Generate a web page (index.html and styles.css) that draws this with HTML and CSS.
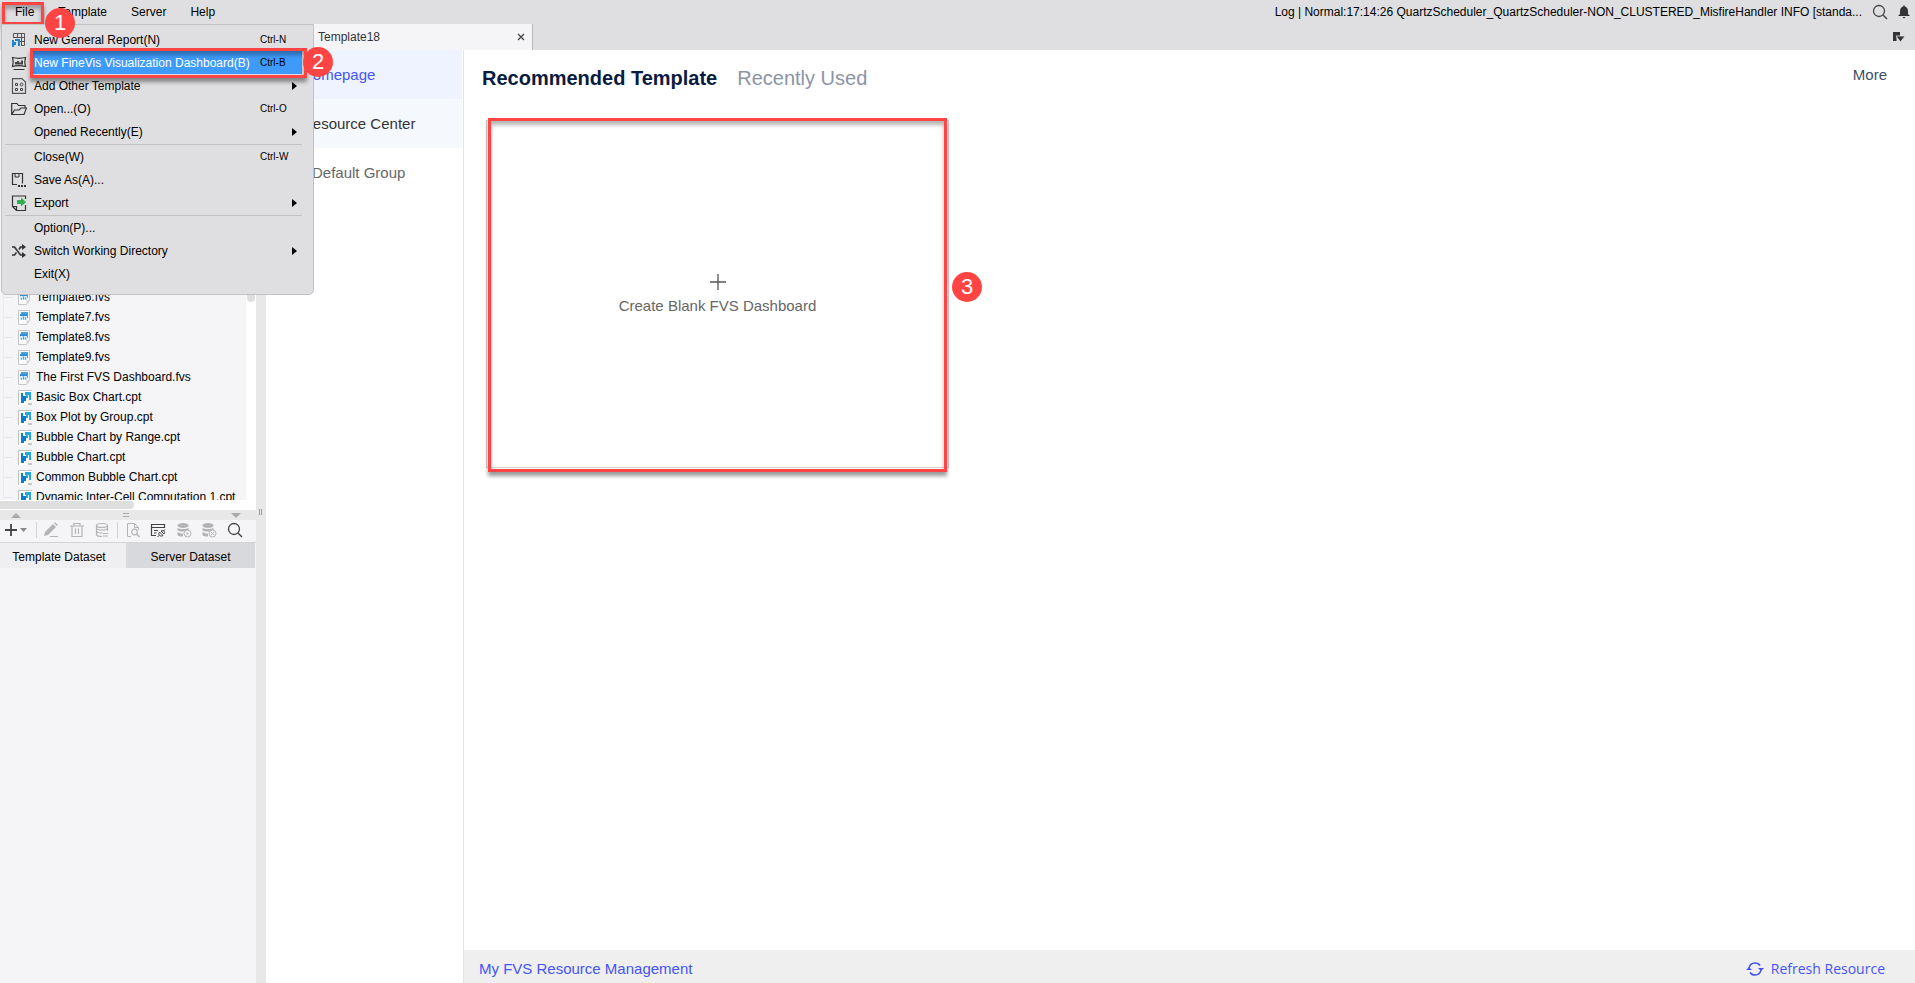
FILE: index.html
```html
<!DOCTYPE html>
<html lang="en">
<head>
    <meta charset="utf-8">
    <title>Designer</title>
    <link rel="stylesheet" href="styles.css">
</head>
<body>

<!-- shared icons -->
<svg class="defs" width="0" height="0">
    <symbol id="fvs" viewBox="0 0 14 15">
        <path d="M.5 .5h11v10l-3 4h-8z" fill="#fafafa" stroke="#c4c6ca"/>
        <path d="M12 10.500H8.500V14z" fill="#d0d2d5"/>
        <path d="M3 2h7v6H9V4H3z" fill="#4aa3e0"/>
        <path d="M2 4h7v2H2z" fill="#2f8fd6"/>
        <path d="M2 6h7v4H2z" fill="#cdeaf8"/>
        <path d="M3.500 9.500V8M5.500 9.500V6.500M7.500 9.500V7.500" stroke="#5aa85a"/>
    </symbol>
    <symbol id="cpt" viewBox="0 0 14 15">
        <path d="M0 0h14v11h-4v4H0z" fill="#fff"/>
        <path d="M.5 15V.5H14" fill="none" stroke="#c4c4c4"/>
        <path d="M10 13h4v2h-4z" fill="#c4c4c4"/>
        <path d="M3 3h2v3h3v5H6v2H3z" fill="#0a7bd0"/>
        <path d="M7 2h6v8h-2V5h-1v3H8V5H7z" fill="#21a9e6"/>
    </symbol>
    <symbol id="search" viewBox="0 0 16 16">
        <circle cx="7" cy="7" r="5.500" fill="none" stroke="currentColor" stroke-width="1.300"/>
        <path d="M11 11l4 4" stroke="currentColor" stroke-width="1.500"/>
    </symbol>
    <symbol id="db" viewBox="0 0 16 16">
        <ellipse cx="7" cy="3.500" rx="5.500" ry="2.500" fill="currentColor"/>
        <path d="M1.500 5.500c1 2 10 2 11 0v2.500c-1 2-10 2-11 0zM1.500 9.500c1 1.500 3 2 5.500 2v3c-3 0-5-.5-5.500-1.500z" fill="currentColor"/>
        <circle cx="11.500" cy="11.500" r="3.500" fill="#f5f5f7" stroke="currentColor"/>
    </symbol>
</svg>

<header class="menuBar">
    <div class="fileItem">
        <button class="menuButton">File</button>
        <span class="mark"></span>
        <span class="badge badgeOne">1</span>
    </div>
    <button class="menuButton">Template</button>
    <button class="menuButton">Server</button>
    <button class="menuButton">Help</button>
    <p class="log">Log | Normal:17:14:26 QuartzScheduler_QuartzScheduler-NON_CLUSTERED_MisfireHandler INFO [standa...</p>
    <button class="iconButton topIcon" aria-label="Search"><svg width="16" height="16"><use href="#search"/></svg></button>
    <button class="iconButton topIcon" aria-label="Notifications">
        <svg width="12" height="14" viewBox="0 0 12 14"><path d="M6 0l1 1.500c2 .5 3 2.500 3 5V9l2 2H0l2-2V6.500c0-2.500 1-4.500 3-5zM4.500 12h3L6 13.500z" fill="#333"/></svg>
    </button>

    <ul class="fileMenu">
        <li><button class="menuRow">
            <svg class="menuIcon" viewBox="0 0 16 16"><path d="M2.500 6V1.500h11v12H10M2 5.500h11.500M6.500 1.500V6M10.500 1.500v12M9 9.500h4.500" fill="none" stroke="#555"/><path d="M1 8h2v2h2v3H3v2H1zM4 7h5v7H7V9H4z" fill="#1787d4"/></svg>
            New General Report(N)<kbd>Ctrl-N</kbd></button></li>
        <li class="selectedItem"><button class="menuRow">
            <svg class="menuIcon" viewBox="0 0 16 16"><path d="M1.500 2.500c4 1 9 1 13 0-1 3-1 6 0 9-4-1-9-1-13 0 1-3 1-6 0-9zM2.500 14.500h11" fill="none" stroke="#333" stroke-width="1.200"/><path d="M4 9.500V7h2V6h2v1.500h2V5.500h2v4z" fill="#444"/></svg>
            <span class="selectedText">New FineVis Visualization Dashboard(B)</span><kbd>Ctrl-B</kbd></button>
            <span class="mark"></span>
            <span class="badge badgeTwo">2</span></li>
        <li><button class="menuRow">
            <svg class="menuIcon" viewBox="0 0 16 16"><path d="M1.500 .6H11l3.500 3.500v11.300h-13z" fill="none" stroke="#555" stroke-width="1.200"/><path d="M4.500 5.500h2v2h-2zM4.500 10.500h2v2h-2zM9.500 10.500h2v2h-2z" fill="none" stroke="#444"/><circle cx="10.500" cy="6.500" r="1.400" fill="none" stroke="#444"/></svg>
            Add Other Template<i class="arrow"></i></button></li>
        <li><button class="menuRow">
            <svg class="menuIcon" viewBox="0 0 16 16"><path d="M.7 13.500V2.500H6l1.500 2H14V7M.7 13.500L3.500 9H8l2-2h5.500L13 13.500z" fill="none" stroke="#333" stroke-width="1.200"/></svg>
            Open...(O)<kbd>Ctrl-O</kbd></button></li>
        <li><button class="menuRow"><i class="menuIcon"></i>Opened Recently(E)<i class="arrow"></i></button></li>
        <li class="separator"></li>
        <li><button class="menuRow"><i class="menuIcon"></i>Close(W)<kbd>Ctrl-W</kbd></button></li>
        <li><button class="menuRow">
            <svg class="menuIcon" viewBox="0 0 16 16"><path d="M6 12.500H1.500v-11h10v10" fill="none" stroke="#333" stroke-width="1.200"/><path d="M4 2v3h4V2" fill="none" stroke="#333"/><path d="M7 13h2v2H7zM10 13h2v2h-2zM13 13h2v2h-2z" fill="#333"/></svg>
            Save As(A)...</button></li>
        <li><button class="menuRow">
            <svg class="menuIcon" viewBox="0 0 16 16"><path d="M14.500 4V1H1.500v10.500l4 4h9V10M1.500 11.500h4v4" fill="none" stroke="#333" stroke-width="1.200"/><path d="M6 5h4V2.500L15 7l-5 4.500V9H6z" fill="#2fae4e"/></svg>
            Export<i class="arrow"></i></button></li>
        <li class="separator"></li>
        <li><button class="menuRow"><i class="menuIcon"></i>Option(P)...</button></li>
        <li><button class="menuRow">
            <svg class="menuIcon" viewBox="0 0 16 16"><path d="M1 4h2.500l6 8H12M1 12h2.500l2-2.500M8 6.500L9.500 4H12" fill="none" stroke="#333" stroke-width="1.600"/><path d="M11 1l4 3-4 3zM11 9l4 3-4 3z" fill="#333"/></svg>
            Switch Working Directory<i class="arrow"></i></button></li>
        <li><button class="menuRow"><i class="menuIcon"></i>Exit(X)</button></li>
    </ul>
</header>

<div class="tabBar">
    <div class="fileTab">
        <span>Template18</span>
        <button class="iconButton" aria-label="Close tab"><svg width="8" height="8" viewBox="0 0 8 8"><path d="M1 1l6 6M7 1L1 7" stroke="#444" stroke-width="1.300"/></svg></button>
    </div>
    <button class="iconButton" aria-label="Tab list">
        <svg width="12" height="12" viewBox="0 0 12 12"><path d="M0 1h7v4H3.500v5H0z" fill="#333"/><path d="M3 5h9l-4.500 6z" fill="#333" stroke="#dfdfe1" stroke-width=".8"/></svg>
    </button>
</div>

<div class="workspace">
    <aside class="leftPanel">
        <div class="treeArea">
            <ul class="tree">
                <li><svg class="fileIcon"><use href="#fvs"/></svg>Template6.fvs</li>
                <li><svg class="fileIcon"><use href="#fvs"/></svg>Template7.fvs</li>
                <li><svg class="fileIcon"><use href="#fvs"/></svg>Template8.fvs</li>
                <li><svg class="fileIcon"><use href="#fvs"/></svg>Template9.fvs</li>
                <li><svg class="fileIcon"><use href="#fvs"/></svg>The First FVS Dashboard.fvs</li>
                <li><svg class="fileIcon"><use href="#cpt"/></svg>Basic Box Chart.cpt</li>
                <li><svg class="fileIcon"><use href="#cpt"/></svg>Box Plot by Group.cpt</li>
                <li><svg class="fileIcon"><use href="#cpt"/></svg>Bubble Chart by Range.cpt</li>
                <li><svg class="fileIcon"><use href="#cpt"/></svg>Bubble Chart.cpt</li>
                <li><svg class="fileIcon"><use href="#cpt"/></svg>Common Bubble Chart.cpt</li>
                <li><svg class="fileIcon"><use href="#cpt"/></svg>Dynamic Inter-Cell Computation 1.cpt</li>
            </ul>
            <div class="scrollY"><div class="thumbY"></div></div>
        </div>
        <div class="scrollX"><div class="thumbX"></div></div>
        <div class="splitter">
            <i class="up"></i><i class="grip"></i><i class="down"></i>
        </div>
        <div class="toolbar">
            <button class="iconButton dark" aria-label="Add dataset"><svg width="24" height="16" viewBox="0 0 24 16"><path d="M0 8h12M6 2v12" stroke="currentColor" stroke-width="1.800"/><path d="M15 6h7l-3.500 4z" fill="#888"/></svg></button>
            <i class="toolLine"></i>
            <button class="iconButton" aria-label="Edit"><svg width="16" height="16" viewBox="0 0 16 16"><path d="M1 14l1-4 8-8 3 3-8 8zM11 1l1-1 3 3-1 1z" fill="currentColor"/><path d="M7 14.500h8" stroke="currentColor"/></svg></button>
            <button class="iconButton" aria-label="Delete"><svg width="16" height="16" viewBox="0 0 16 16"><path d="M1 4h14M5 4V1.500h6V4M3 4v10.500h10V4M6.500 6.500V12M9.500 6.500V12" fill="none" stroke="currentColor" stroke-width="1.200"/></svg></button>
            <button class="iconButton" aria-label="Database"><svg width="16" height="16" viewBox="0 0 16 16"><path d="M2.500 3.500v9c0 1 2 2 5.500 2M13.500 3.500V9M2.500 6.500c1 2 10 2 11 0M2.500 9.500c1 1.500 4 1.500 6 1.500M9 11.500h5M9 14h5" fill="none" stroke="currentColor" stroke-width="1.200"/><ellipse cx="8" cy="3.500" rx="5.500" ry="2" fill="none" stroke="currentColor" stroke-width="1.200"/></svg></button>
            <i class="toolLine"></i>
            <button class="iconButton" aria-label="Preview"><svg width="16" height="16" viewBox="0 0 16 16"><path d="M6 14.500H2.500v-13h7l4 4V8M9.500 1.500v4h4" fill="none" stroke="currentColor"/><circle cx="9.500" cy="10" r="2.800" fill="none" stroke="currentColor" stroke-width="1.200"/><path d="M11.500 12l3 3" stroke="currentColor" stroke-width="1.300"/></svg></button>
            <button class="iconButton dark" aria-label="Dataset settings"><svg width="16" height="16" viewBox="0 0 16 16"><path d="M6 13.500H1.500v-11h13V6M1.500 5.500h13M4 8.500h4M4 11h2.500" fill="none" stroke="currentColor" stroke-width="1.200"/><path d="M7.500 15l2-2M13 9.500l2-2M9.500 10l3.500 3.500c-1.500 1-3 .5-3.500-.3-.8-.7-1-2 0-3.200zM11 9l3 3c1-1 .8-2 .2-2.700C13.500 8.500 12 8 11 9z" fill="none" stroke="currentColor"/></svg></button>
            <button class="iconButton" aria-label="Run dataset"><svg width="16" height="16" viewBox="0 0 16 16"><use href="#db" width="16" height="16"/><path d="M10.500 10v3l2.500-1.500z" fill="currentColor"/></svg></button>
            <button class="iconButton" aria-label="Clear dataset"><svg width="16" height="16" viewBox="0 0 16 16"><use href="#db" width="16" height="16"/><path d="M10 10l3 3M13 10l-3 3" stroke="currentColor"/></svg></button>
            <button class="iconButton dark" aria-label="Find"><svg width="16" height="16"><use href="#search"/></svg></button>
        </div>
        <div class="datasetTabs">
            <button class="datasetTab active">Template Dataset</button>
            <button class="datasetTab">Server Dataset</button>
        </div>
    </aside>
    <div class="divider"><i></i></div>

    <nav class="sideNav">
        <a class="navItem current" href="#">Homepage</a>
        <a class="navItem center" href="#">Resource Center</a>
        <a class="navItem child" href="#">Default Group</a>
    </nav>

    <main class="content">
        <div class="contentTop">
            <h1>Recommended Template</h1>
            <h2>Recently Used</h2>
            <a class="more" href="#">More</a>
        </div>
        <div class="cards">
            <div class="cardWrap">
                <button class="blankCard">
                    <svg width="16" height="16" viewBox="0 0 16 16"><path d="M0 8h16M8 0v16" stroke="#555" stroke-width="1.300"/></svg>
                    Create Blank FVS Dashboard
                </button>
                <span class="mark"></span>
                <span class="badge badgeThree">3</span>
            </div>
        </div>
        <footer class="bottomBar">
            <a href="#">My FVS Resource Management</a>
            <a class="refresh" href="#">
                <svg width="18" height="16" viewBox="0 0 18 16"><path d="M3 8V7.500C3.500 4 6 2 9 2c2.500 0 4 1 5 2.500M15 8v.5c-.5 3.500-3 5.500-6 5.500-2.500 0-4-1-5-2.500" fill="none" stroke="#4555f5" stroke-width="1.600"/><path d="M0 9h6L3 6zM12 7h6l-3 3z" fill="#4555f5"/></svg>
                Refresh Resource
            </a>
        </footer>
    </main>
</div>

</body>
</html>
```
FILE: styles.css
```css
*{
    box-sizing: border-box;
}

body{
    margin: 0;
    height: 100vh;
    display: flex;
    flex-direction: column;
    overflow: hidden;
    background-color: white;
    color: black;
    font-family: "Liberation Sans", Arial, sans-serif;
    font-size: 12px;
}

ul{
    list-style-type: none;
    margin: 0;
    padding: 0;
}

a{
    text-decoration: none;
    color: #4555f5;
}

button{
    border: none;
    padding: 0;
    background: none;
    font: inherit;
    color: inherit;
    cursor: pointer;
}

svg{
    display: block;
    flex: none;
}

.defs{
    position: absolute;
}

.iconButton{
    display: flex;
    align-items: center;
    justify-content: center;
    color: #b4b4b6;
}

.dark, .topIcon{
    color: #444;
}

/* red annotation frames and numbers */
.mark{
    position: absolute;
    border: 3px solid #ff4444;
    box-shadow: 0 4px 4px rgba(0, 0, 0, 0.4), inset 0 4px 4px rgba(0, 0, 0, 0.3);
    pointer-events: none;
}

.badge{
    position: absolute;
    z-index: 5;
    width: 30px;
    height: 30px;
    border-radius: 50%;
    background-color: #ff4444;
    color: white;
    font-size: 22px;
    line-height: 30px;
    text-align: center;
}

/* top bar */
.menuBar{
    position: relative;
    z-index: 2;
    display: flex;
    align-items: center;
    flex: none;
    height: 24px;
    padding: 0 2px 0 3px;
    background-color: #dfdfe1;
}

.menuButton{
    height: 24px;
    padding: 0 12px;
}

.fileItem{
    position: relative;
}

.fileItem .mark{
    inset: 2px 2px -1px -1px;
}

.badgeOne{
    left: 42px;
    top: 8px;
}

.log{
    margin: 0 7px 0 auto;
}

.topIcon{
    width: 18px;
    margin-left: 2px;
}

.topIcon + .topIcon{
    margin-left: 6px;
}

/* file menu */
.fileMenu{
    position: absolute;
    left: 1px;
    top: 24px;
    width: 313px;
    padding: 3px 11px 9px 3px;
    border: 1px solid #c2c2c4;
    border-radius: 0 0 5px 5px;
    background-color: #dfdfe1;
}

.fileMenu li{
    position: relative;
}

.menuRow{
    display: flex;
    align-items: center;
    width: 100%;
    height: 23px;
    padding-left: 6px;
    text-align: left;
}

.menuIcon{
    width: 16px;
    height: 16px;
    margin-right: 7px;
}

kbd{
    margin-left: auto;
    width: 42px;
    font-family: inherit;
    font-size: 10px;
}

.arrow{
    margin-left: auto;
    margin-right: 5px;
    border: 4px solid transparent;
    border-left: 5px solid black;
    border-right: 0;
}

.menuRow:hover{
    background-color: #d2d2d6;
}

.selectedItem .menuRow{
    background: linear-gradient(#3f9bfb, #3f9bfb) 28px 0 no-repeat;
}

.selectedText{
    color: white;
    white-space: nowrap;
}

.fileMenu .separator{
    height: 2px;
    border-bottom: 1px solid #c2c2c4;
}

.selectedItem .mark{
    inset: -3px -5px -4px 25px;
}

.badgeTwo{
    right: -31px;
    top: -4px;
}

/* tabs */
.tabBar{
    display: flex;
    align-items: center;
    justify-content: space-between;
    flex: none;
    height: 26px;
    padding: 0 10px 0 266px;
    background-color: #dfdfe1;
}

.fileTab{
    display: flex;
    align-items: center;
    justify-content: space-between;
    width: 267px;
    height: 26px;
    padding: 0 7px 1px 52px;
    border-right: 1px solid #b8b8ba;
    background-color: #f5f5f7;
    color: #333;
}

.workspace{
    display: flex;
    flex: 1;
    min-height: 0;
}

/* left panel */
.leftPanel{
    display: flex;
    flex-direction: column;
    flex: none;
    width: 256px;
    background-color: #f5f5f7;
}

.treeArea{
    display: flex;
    flex: none;
    height: 450px;
    overflow: hidden;
}

.tree{
    flex: 1;
    margin-left: 3px;
    padding-top: 237px;
    border-left: 1px solid #ececee;
}

.tree li{
    display: flex;
    align-items: center;
    height: 20px;
    white-space: nowrap;
}

.tree li::before{
    content: "";
    width: 9px;
    margin-right: 5px;
    border-top: 1px solid #e8e8ea;
}

.fileIcon{
    width: 14px;
    height: 15px;
    margin-right: 4px;
}

.scrollY{
    width: 10px;
    padding: 0 1px;
    background-color: white;
}

.thumbY{
    height: 252px;
    border-radius: 4px;
    background-color: #dedede;
}

.scrollX{
    height: 10px;
    padding: 1px 0;
    background-color: white;
}

.thumbX{
    width: 134px;
    height: 8px;
    border-radius: 0 4px 4px 0;
    background-color: #dedede;
}

.splitter{
    display: flex;
    align-items: center;
    justify-content: space-between;
    height: 10px;
    padding: 0 15px 0 11px;
    background-color: #e8e8e8;
}

.up, .down{
    border: 5px solid transparent;
    border-top: 0;
    border-bottom: 5px solid #aaa;
}

.down{
    border-bottom: 0;
    border-top: 5px solid #aaa;
}

.grip{
    width: 6px;
    height: 4px;
    border: solid #aaa;
    border-width: 1px 0;
}

.toolbar{
    display: flex;
    align-items: center;
    justify-content: space-between;
    height: 23px;
    padding: 0 13px 2px 5px;
    border-bottom: 1px solid #d4d4d6;
}

.toolLine{
    width: 1px;
    height: 16px;
    margin: 0 -3px;
    background-color: #d4d4d6;
}

.datasetTabs{
    display: flex;
    height: 25px;
    padding-right: 1px;
}

.datasetTab{
    flex: 1;
    padding-top: 2px;
    background-color: #d8d9dc;
}

.datasetTab.active{
    flex: none;
    width: 126px;
    padding-right: 8px;
    background-color: #efeff1;
}

.divider{
    flex: none;
    width: 10px;
    padding: 459px 3px 0;
    background-color: #e8e8e8;
}

.divider i{
    display: block;
    width: 3px;
    height: 6px;
    border: solid #999;
    border-width: 0 1px;
}

/* navigation */
.sideNav{
    flex: none;
    width: 198px;
    padding-right: 1px;
    border-right: 1px solid #e2e4e8;
    font-size: 15px;
}

.navItem{
    display: flex;
    align-items: center;
    height: 49px;
    padding-left: 36px;
    color: #666;
}

.current{
    background-color: #eef3ff;
    color: #4555f5;
}

.center{
    background-color: #f5f9fe;
    color: #333;
}

.child{
    padding-left: 46px;
}

/* main area */
.content{
    display: flex;
    flex-direction: column;
    flex: 1;
    font-size: 15px;
}

.contentTop{
    display: flex;
    align-items: center;
    gap: 20px;
    height: 56px;
    padding: 0 28px 0 18px;
}

h1, h2{
    margin: 0;
    font-size: 20px;
    color: #0b1b40;
}

h2{
    font-weight: normal;
    color: #8c94a5;
}

.more{
    margin-left: auto;
    padding-bottom: 8px;
    color: #3d4d66;
}

.cards{
    flex: 1;
    padding: 14px 22px;
}

.cardWrap{
    position: relative;
    width: 463px;
}

.blankCard{
    display: flex;
    flex-direction: column;
    align-items: center;
    justify-content: center;
    gap: 7px;
    width: 100%;
    height: 348px;
    border: 1px solid #d0d0d0;
    background-color: white;
    color: #666;
}

.cardWrap .mark{
    inset: -2px 2px -4px 2px;
}

.badgeThree{
    right: -33px;
    top: 152px;
}

.bottomBar{
    display: flex;
    align-items: center;
    justify-content: space-between;
    height: 33px;
    padding: 4px 30px 0 15px;
    background-color: #efefef;
}

.refresh{
    display: flex;
    align-items: center;
    gap: 7px;
    font-family: "Open Sans", "Noto Sans", sans-serif;
    font-size: 14px;
}
```
